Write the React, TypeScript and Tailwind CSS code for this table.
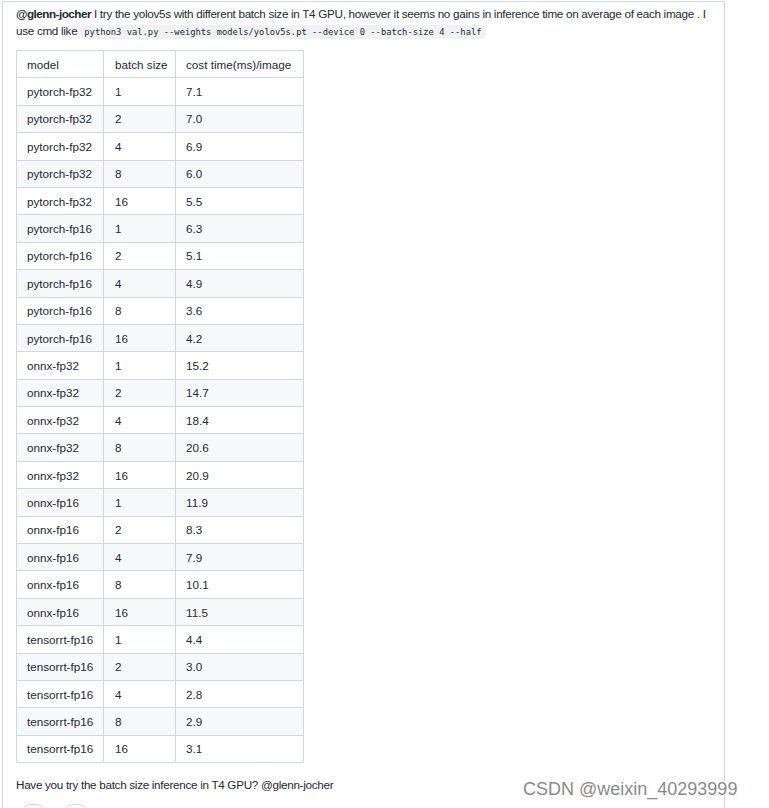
import React from "react";

const rows: [string, string, string][] = [
  ["pytorch-fp32", "1", "7.1"],
  ["pytorch-fp32", "2", "7.0"],
  ["pytorch-fp32", "4", "6.9"],
  ["pytorch-fp32", "8", "6.0"],
  ["pytorch-fp32", "16", "5.5"],
  ["pytorch-fp16", "1", "6.3"],
  ["pytorch-fp16", "2", "5.1"],
  ["pytorch-fp16", "4", "4.9"],
  ["pytorch-fp16", "8", "3.6"],
  ["pytorch-fp16", "16", "4.2"],
  ["onnx-fp32", "1", "15.2"],
  ["onnx-fp32", "2", "14.7"],
  ["onnx-fp32", "4", "18.4"],
  ["onnx-fp32", "8", "20.6"],
  ["onnx-fp32", "16", "20.9"],
  ["onnx-fp16", "1", "11.9"],
  ["onnx-fp16", "2", "8.3"],
  ["onnx-fp16", "4", "7.9"],
  ["onnx-fp16", "8", "10.1"],
  ["onnx-fp16", "16", "11.5"],
  ["tensorrt-fp16", "1", "4.4"],
  ["tensorrt-fp16", "2", "3.0"],
  ["tensorrt-fp16", "4", "2.8"],
  ["tensorrt-fp16", "8", "2.9"],
  ["tensorrt-fp16", "16", "3.1"],
];

export default function App() {
  return (
    <div className="relative w-[769px] h-[808px] overflow-hidden bg-white">
      <div
        className="ml-[2px] mt-[1px] w-[723px] h-[820px] border-l border-t border-r border-[#d0d7de] pl-[13px] pr-[6px] pt-[3px] text-[#24292f] text-[11.7px] leading-[17px]"
        style={{ fontFamily: '"Liberation Sans", Arial, sans-serif' }}
      >
        <p className="tracking-[-0.3px]">
          <span className="font-bold tracking-[-0.5px]">@glenn-jocher</span> I try the yolov5s with different batch size in T4 GPU, however it seems no gains in inference time on average of each image . I use cmd like{" "}
          <code
            className="bg-[#eff1f3] rounded-[5px] px-[4px] py-[2px] text-[8.8px] tracking-normal"
            style={{ fontFamily: '"DejaVu Sans Mono", "Liberation Mono", monospace' }}
          >
            python3 val.py --weights models/yolov5s.pt --device 0 --batch-size 4 --half
          </code>
        </p>
        <table className="mt-[9px] border-collapse table-fixed w-[287px] whitespace-nowrap">
          <colgroup>
            <col className="w-[87px]" />
            <col className="w-[72px]" />
            <col className="w-[128px]" />
          </colgroup>
          <thead>
            <tr className="h-[27.4px]">
              <th className="border border-[#d0d7de] pl-[10px] py-0 text-left font-normal">model</th>
              <th className="border border-[#d0d7de] pl-[11px] py-0 text-left font-normal">batch size</th>
              <th className="border border-[#d0d7de] pl-[10px] py-0 text-left font-normal">cost time(ms)/image</th>
            </tr>
          </thead>
          <tbody>
            {rows.map((r, i) => (
              <tr key={i} className={`h-[27.4px] ${i % 2 === 1 ? "bg-[#f6f8fa]" : "bg-white"}`}>
                <td className="border border-[#d0d7de] pl-[10px] py-0">{r[0]}</td>
                <td className="border border-[#d0d7de] pl-[11px] py-0">{r[1]}</td>
                <td className="border border-[#d0d7de] pl-[10px] py-0">{r[2]}</td>
              </tr>
            ))}
          </tbody>
        </table>
        <p className="mt-[13px] tracking-[-0.3px]">Have you try the batch size inference in T4 GPU? @glenn-jocher</p>
        <div className="mt-[11px] ml-[5px] flex gap-[17px]">
          <div className="w-[25px] h-[20px] rounded-full border border-[#d0d7de]" />
          <div className="w-[25px] h-[20px] rounded-full border border-[#d0d7de]" />
        </div>
      </div>
      <div
        className="absolute left-[523px] top-[776px] text-[18px] text-[#8a8a8a]"
        style={{ fontFamily: '"Liberation Sans", Arial, sans-serif', textShadow: "0 0 2px #fff, 0 0 1px #fff" }}
      >
        CSDN @weixin_40293999
      </div>
    </div>
  );
}
